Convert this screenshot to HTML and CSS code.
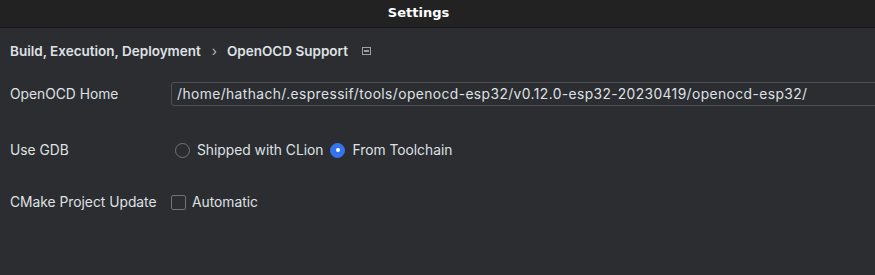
FILE: index.html
```html
<!DOCTYPE html>
<html lang="en">
<head>
    <meta charset="UTF-8">
    <title>Settings</title>
    <link rel="stylesheet" href="styles.css">
</head>
<body>
    <div class="titlebar">Settings</div>
    <div class="content">
        <div class="crumbs">
            <span>Build, Execution, Deployment</span>
            <span class="sep">›</span>
            <span>OpenOCD Support</span>
            <svg class="crumb-icon" width="9" height="8" viewBox="0 0 9 8">
                <rect x="0.5" y="0.5" width="8" height="7" fill="none" stroke="#9da0a8"/>
                <rect x="2" y="3" width="5" height="2" fill="#9da0a8"/>
            </svg>
        </div>
        <div class="form">
            <div class="label row-home">OpenOCD Home</div>
            <div class="field row-home">
                <div class="text-input">/home/hathach/.espressif/tools/openocd-esp32/v0.12.0-esp32-20230419/openocd-esp32/</div>
            </div>

            <div class="label row-gdb">Use GDB</div>
            <div class="field row-gdb radios">
                <label class="opt"><span class="radio"></span>Shipped with CLion</label>
                <label class="opt"><span class="radio checked"></span>From Toolchain</label>
            </div>

            <div class="label row-cmake">CMake Project Update</div>
            <div class="field row-cmake">
                <label class="opt check"><span class="checkbox"></span>Automatic</label>
            </div>
        </div>
    </div>
</body>
</html>
```
FILE: styles.css
```css
body {
    margin: 0;
    background-color: #2b2d30;
    color: #dfe1e5;
    font-family: Inter, "Noto Sans", sans-serif;
    font-size: 13.8px;
    overflow: hidden;
}
.titlebar {
    height: 27px;
    line-height: 25px;
    background-color: #222222;
    border-bottom: 1px solid #171717;
    color: #ffffff;
    font-family: "DejaVu Sans", sans-serif;
    font-weight: bold;
    font-size: 13px;
    text-align: center;
    padding-right: 38px;
}
.content { padding: 0 0 0 10px; }
.crumbs {
    display: flex;
    align-items: center;
    height: 45px;
    font-size: 13.5px;
    font-weight: 600;
}
.crumbs .sep { margin: 0 10px 0 11px; font-weight: 400; color: #b4b8bf; }
.crumb-icon { margin-left: 14px; margin-top: 1px; }
.form {
    display: grid;
    grid-template-columns: 161px 1fr;
    grid-template-rows: 32px 24px 32px 22px 28px;
    margin-top: 5px;
}
.label { display: flex; align-items: center; }
.field { display: flex; align-items: center; }
.row-home { grid-row: 1; }
.row-gdb { grid-row: 3; }
.row-cmake { grid-row: 5; }
.text-input {
    width: 720px;
    height: 22px;
    line-height: 22px;
    border: 1px solid #4e5157;
    border-radius: 3px;
    padding-left: 5px;
    white-space: nowrap;
    letter-spacing: 0.42px;
}
.radios { gap: 7px; padding-left: 4px; }
.opt { display: flex; align-items: center; gap: 7px; }
.opt.check { gap: 6px; }
.radio {
    width: 13px;
    height: 13px;
    border: 1px solid #6f737a;
    border-radius: 50%;
    box-sizing: content-box;
    display: inline-block;
}
.radio.checked {
    background-color: #3574f0;
    border-color: #3574f0;
    position: relative;
}
.radio.checked::after {
    content: "";
    position: absolute;
    left: 4.5px;
    top: 4.5px;
    width: 4px;
    height: 4px;
    background-color: #ffffff;
    border-radius: 50%;
}
.checkbox {
    width: 13px;
    height: 13px;
    border: 1px solid #6f737a;
    border-radius: 2px;
    display: inline-block;
}
```
